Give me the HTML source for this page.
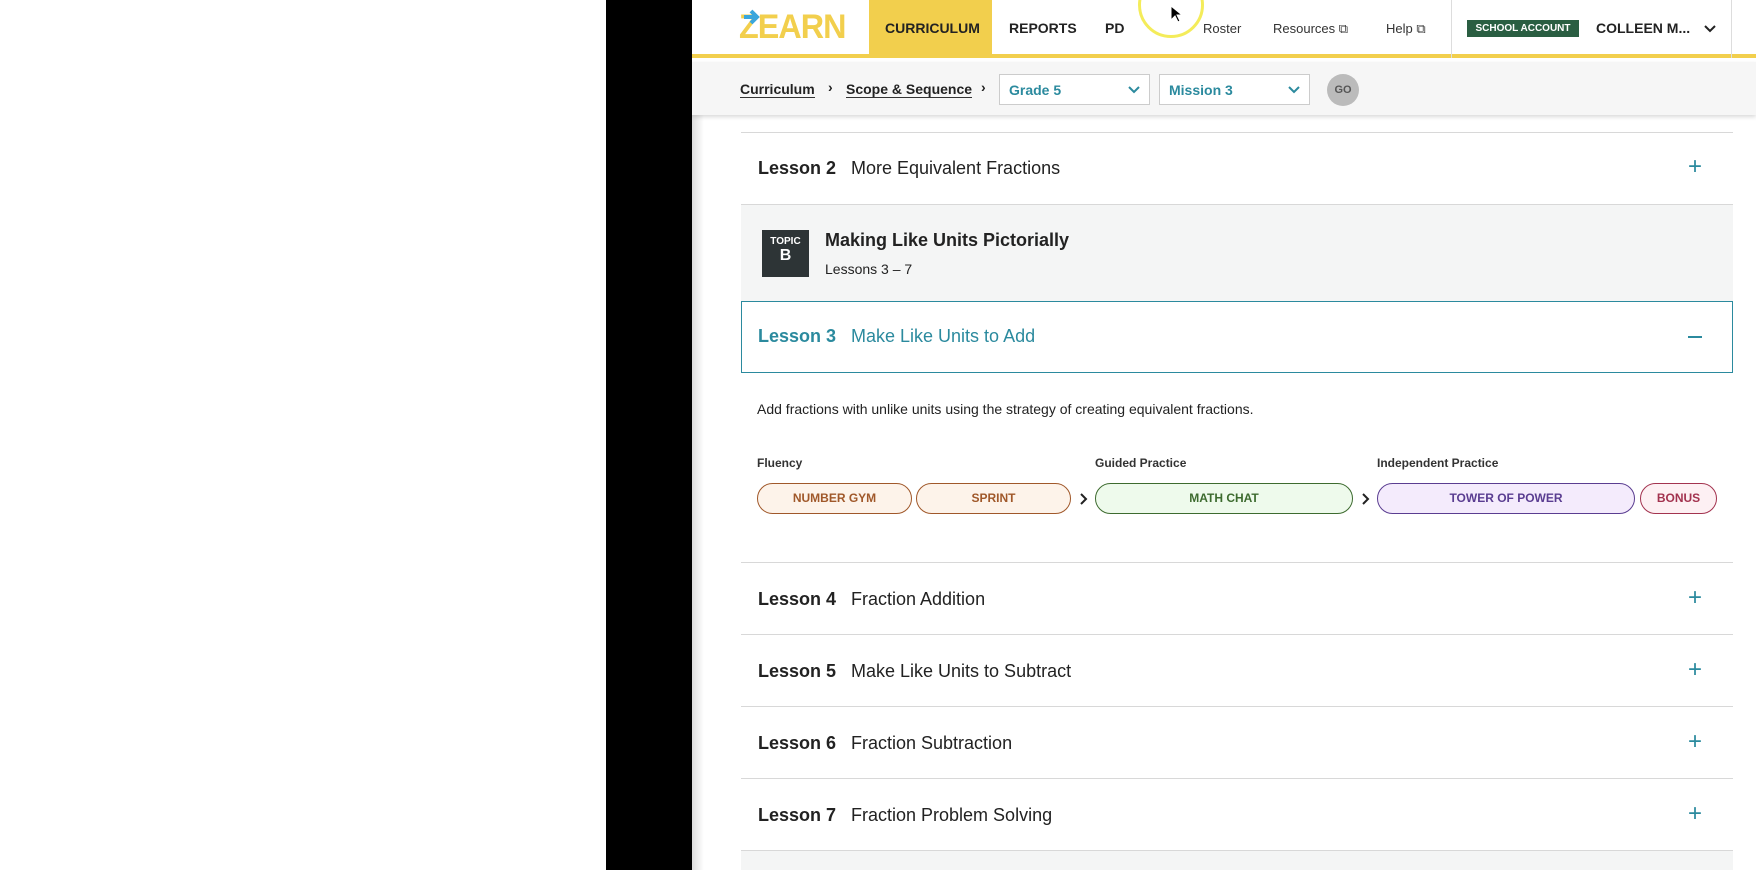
<!DOCTYPE html><html><head><style>
*{margin:0;padding:0;box-sizing:border-box}
body{width:1756px;height:870px;overflow:hidden;background:#fff;font-family:"Liberation Sans",sans-serif;position:relative;color:#222}
.a{position:absolute}
.blk{left:606px;top:0;width:86px;height:870px;background:#000}
.page{left:692px;top:0;width:1064px;height:870px;background:#fff}
.hdr{left:692px;top:0;width:1064px;height:58px;background:#fff;border-bottom:4px solid #f2cf4d}
.sub{left:692px;top:62px;width:1064px;height:53px;background:#f6f6f6;box-shadow:0 2px 4px rgba(0,0,0,.15)}
.nav{font-size:14px;font-weight:bold;color:#222;top:20px}
.nav2{font-size:13px;color:#333;top:21px}
.line{left:741px;width:992px;height:1px;background:#d8d8d8}
.les{left:758px;font-size:18px;font-weight:bold}
.tt{left:851px;font-size:18px}
.plus{left:1688px;font-size:24px;color:#2b8a9e}
.pill{top:483px;height:31px;border-radius:16px;font-size:12px;font-weight:bold;text-align:center;line-height:29px;border:1px solid}
.lab{top:456px;font-size:12px;font-weight:bold;color:#333}
.sel{top:74px;height:31px;border:1px solid #ccc;background:#fff;color:#2b8a9e;font-size:14px;font-weight:bold;padding:7px 9px}
.sel svg{position:absolute;right:9px;top:11px}
</style></head><body>
<div class="a blk"></div>
<div class="a page"></div>
<div class="a" style="left:692px;top:115px;width:12px;height:755px;background:linear-gradient(90deg,#ddd,#fff)"></div>
<div class="a hdr"></div>
<div class="a" style="left:739px;top:8px;font-size:34px;font-weight:bold;color:#f2cf4d;letter-spacing:-1px;transform:scaleX(0.95);transform-origin:left">ZEARN</div>
<svg class="a" style="left:742px;top:9px" width="20" height="16"><path d="M2 8H15M9 2l6 6-6 6" stroke="#3aa6dc" stroke-width="4" fill="none"/></svg>
<div class="a" style="left:869px;top:0;width:123px;height:58px;background:#f2cf4d"></div>
<div class="a nav" style="left:885px">CURRICULUM</div>
<div class="a nav" style="left:1009px">REPORTS</div>
<div class="a nav" style="left:1105px">PD</div>
<div class="a nav2" style="left:1203px">Roster</div>
<div class="a nav2" style="left:1273px">Resources ⧉</div>
<div class="a nav2" style="left:1386px">Help ⧉</div>
<div class="a" style="left:1451px;top:0;width:1px;height:58px;background:#ddd"></div>
<div class="a" style="left:1731px;top:0;width:1px;height:58px;background:#ddd"></div>
<div class="a" style="left:1467px;top:20px;width:112px;height:17px;background:#2a5e42;color:#fff;font-size:10px;font-weight:bold;text-align:center;line-height:17px">SCHOOL ACCOUNT</div>
<div class="a nav" style="left:1596px">COLLEEN M...</div>
<svg class="a" style="left:1704px;top:25px" width="12" height="8"><path d="M1 1l5 5 5-5" stroke="#222" stroke-width="2" fill="none"/></svg>
<div class="a" style="left:1138px;top:-28px;width:66px;height:66px;border:3px solid #f4ec5a;border-radius:50%"></div>
<svg class="a" style="left:1170px;top:5px" width="12" height="18"><path d="M1 1v14l4-4 3 6 2-1-3-6h5z" fill="#000" stroke="#fff" stroke-width="1"/></svg>
<div class="a sub"></div>
<div class="a" style="left:740px;top:81px;font-size:14px;font-weight:bold;border-bottom:1px solid #333">Curriculum</div>
<div class="a" style="left:828px;top:79px;font-size:14px;font-weight:bold">›</div>
<div class="a" style="left:846px;top:81px;font-size:14px;font-weight:bold;border-bottom:1px solid #333">Scope &amp; Sequence</div>
<div class="a" style="left:981px;top:79px;font-size:14px;font-weight:bold">›</div>
<div class="a sel" style="left:999px;width:151px">Grade 5<svg width="12" height="8"><path d="M1 1l5 5 5-5" stroke="#2b8a9e" stroke-width="2" fill="none"/></svg></div>
<div class="a sel" style="left:1159px;width:151px">Mission 3<svg width="12" height="8"><path d="M1 1l5 5 5-5" stroke="#2b8a9e" stroke-width="2" fill="none"/></svg></div>
<div class="a" style="left:1327px;top:74px;width:32px;height:32px;border-radius:50%;background:#bbb;color:#555;font-size:11px;font-weight:bold;text-align:center;line-height:32px">GO</div>

<div class="a line" style="top:132px"></div>
<div class="a les" style="top:158px">Lesson 2</div><div class="a tt" style="top:158px">More Equivalent Fractions</div><div class="a plus" style="top:153px">+</div>
<div class="a line" style="top:204px"></div>
<div class="a" style="left:741px;top:205px;width:992px;height:96px;background:#f4f5f5"></div>
<div class="a" style="left:762px;top:230px;width:47px;height:47px;background:#2d3436;color:#fff;text-align:center;font-weight:bold"><div style="font-size:10px;margin-top:6px">TOPIC</div><div style="font-size:16px">B</div></div>
<div class="a" style="left:825px;top:230px;font-size:18px;font-weight:bold">Making Like Units Pictorially</div>
<div class="a" style="left:825px;top:261px;font-size:14px">Lessons 3 – 7</div>
<div class="a" style="left:741px;top:301px;width:992px;height:72px;border:1px solid #2b8a9e"></div>
<div class="a les" style="top:326px;color:#2b8a9e">Lesson 3</div><div class="a tt" style="top:326px;color:#2b8a9e">Make Like Units to Add</div>
<div class="a" style="left:1688px;top:336px;width:14px;height:2px;background:#2b8a9e"></div>
<div class="a" style="left:757px;top:401px;font-size:14px">Add fractions with unlike units using the strategy of creating equivalent fractions.</div>
<div class="a lab" style="left:757px">Fluency</div>
<div class="a lab" style="left:1095px">Guided Practice</div>
<div class="a lab" style="left:1377px">Independent Practice</div>
<div class="a pill" style="left:757px;width:155px;background:#fdf3ea;border-color:#a0582a;color:#a0582a">NUMBER GYM</div>
<div class="a pill" style="left:916px;width:155px;background:#fdf3ea;border-color:#a0582a;color:#a0582a">SPRINT</div>
<svg class="a" style="left:1080px;top:493px" width="8" height="12"><path d="M1 1l5 5-5 5" stroke="#222" stroke-width="2" fill="none"/></svg>
<div class="a pill" style="left:1095px;width:258px;background:#eefaec;border-color:#3d6b2f;color:#3d6b2f">MATH CHAT</div>
<svg class="a" style="left:1362px;top:493px" width="8" height="12"><path d="M1 1l5 5-5 5" stroke="#222" stroke-width="2" fill="none"/></svg>
<div class="a pill" style="left:1377px;width:258px;background:#f4ebfc;border-color:#5a3d91;color:#5a3d91">TOWER OF POWER</div>
<div class="a pill" style="left:1640px;width:77px;background:#fdf0f3;border-color:#a3334f;color:#a3334f">BONUS</div>
<div class="a line" style="top:562px"></div>
<div class="a les" style="top:589px">Lesson 4</div><div class="a tt" style="top:589px">Fraction Addition</div><div class="a plus" style="top:584px">+</div>
<div class="a line" style="top:634px"></div>
<div class="a les" style="top:661px">Lesson 5</div><div class="a tt" style="top:661px">Make Like Units to Subtract</div><div class="a plus" style="top:656px">+</div>
<div class="a line" style="top:706px"></div>
<div class="a les" style="top:733px">Lesson 6</div><div class="a tt" style="top:733px">Fraction Subtraction</div><div class="a plus" style="top:728px">+</div>
<div class="a line" style="top:778px"></div>
<div class="a les" style="top:805px">Lesson 7</div><div class="a tt" style="top:805px">Fraction Problem Solving</div><div class="a plus" style="top:800px">+</div>
<div class="a line" style="top:850px"></div>
<div class="a" style="left:741px;top:851px;width:992px;height:19px;background:#f4f5f5"></div>
</body></html>
